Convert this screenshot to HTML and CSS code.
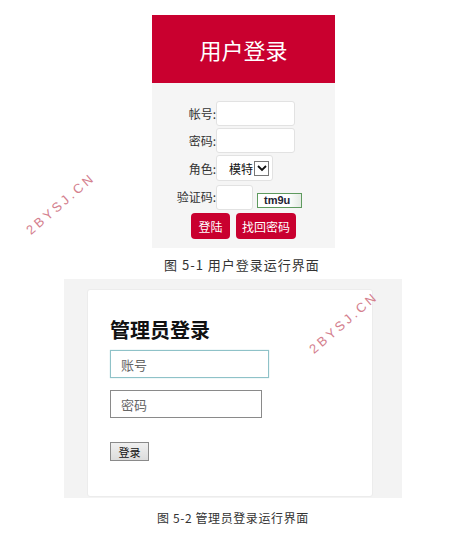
FILE: index.html
```html
<!DOCTYPE html>
<html lang="zh-CN">
<head>
  <meta charset="UTF-8" />
  <meta name="viewport" content="width=device-width, initial-scale=1.0" />
  <title>登录运行界面</title>
  <link rel="stylesheet" href="styles.css">
</head>
<body>
  <div class="page">
    <div class="user-login">
      <div class="user-head">用户登录</div>
      <div class="user-form">
        <label>帐号:</label>
        <input class="field" type="text" />
        <label>密码:</label>
        <input class="field" type="password" />
        <label>角色:</label>
        <div class="select">
          <span>模特</span>
          <span class="arrow">
            <svg width="12" height="12" viewBox="0 0 12 12"><path d="M2 4l4 4 4-4" fill="none" stroke="#111" stroke-width="1.8"/></svg>
          </span>
        </div>
        <label>验证码:</label>
        <div class="code-row">
          <input class="field short" type="text" />
          <span class="captcha">tm9u</span>
        </div>
        <div class="actions">
          <button class="red login">登陆</button>
          <button class="red find">找回密码</button>
        </div>
      </div>
    </div>
    <p class="caption cap1">图 5-1 用户登录运行界面</p>

    <div class="admin-wrap">
      <div class="admin-card">
        <h2>管理员登录</h2>
        <input class="admin-input focus" type="text" placeholder="账号" />
        <input class="admin-input" type="password" placeholder="密码" />
        <button class="plain">登录</button>
      </div>
    </div>
    <p class="caption cap2">图 5-2 管理员登录运行界面</p>

    <span class="mark mark1">2BYSJ.CN</span>
    <span class="mark mark2">2BYSJ.CN</span>
  </div>
</body>
</html>
```

FILE: styles.css
```css
body {
  margin: 0;
  background: #fff;
  font-family: "Noto Sans CJK SC", "Liberation Sans", sans-serif;
  color: #333;
}
.page {
  position: relative;
  width: 474px;
  height: 541px;
  padding-top: 15px;
  box-sizing: border-box;
}
.user-login {
  width: 183px;
  margin-left: 152px;
}
.user-head {
  height: 68px;
  background: #c9002f;
  color: #fff;
  font-size: 22px;
  display: flex;
  align-items: center;
  justify-content: center;
}
.user-form {
  background: #f5f5f5;
  height: 165px;
  box-sizing: border-box;
  padding-top: 18px;
  display: grid;
  grid-template-columns: 64px 1fr;
  align-content: start;
  align-items: center;
  row-gap: 2px;
}
.user-form label {
  justify-self: end;
  font-size: 12px;
  color: #333;
}
.field {
  width: 79px;
  height: 25px;
  box-sizing: border-box;
  border: 1px solid #e2e2e2;
  border-radius: 3px;
  background: #fff;
  margin: 0;
  padding: 0;
}
.field.short { width: 37px; }
.select {
  width: 57px;
  height: 26px;
  box-sizing: border-box;
  border: 1px solid #e2e2e2;
  border-radius: 3px;
  background: #fff;
  display: flex;
  align-items: center;
  justify-content: flex-end;
  gap: 1px;
  padding-right: 3px;
  font-size: 12px;
  color: #111;
}
.arrow {
  width: 15px;
  height: 15px;
  box-sizing: border-box;
  border: 1px solid #777;
  display: flex;
  align-items: center;
  justify-content: center;
}
.code-row {
  display: flex;
  align-items: flex-end;
  gap: 4px;
  margin-top: 2px;
}
.captcha {
  width: 45px;
  height: 15px;
  box-sizing: border-box;
  border: 1px solid #5e9a5e;
  background: linear-gradient(90deg, #fff 70%, #e4ebe4);
  font-family: "Liberation Sans", sans-serif;
  font-weight: bold;
  font-size: 11px;
  line-height: 13px;
  color: #223;
  padding-left: 6px;
  margin-bottom: 2px;
}
.actions {
  grid-column: 1 / 3;
  display: flex;
  gap: 6px;
  padding-left: 39px;
  margin-top: 1px;
}
button.red {
  height: 26px;
  border: none;
  border-radius: 4px;
  background: #c9002f;
  color: #fff;
  font-family: inherit;
  font-size: 12px;
  padding: 0;
}
.login { width: 39px; }
.find { width: 60px; }
.caption {
  margin: 0;
  font-size: 12px;
  color: #333;
  letter-spacing: 0.6px;
  line-height: 18px;
}
.cap1 {
  margin: 8px 0 0 164px;
  font-size: 13px;
  letter-spacing: 1px;
}
.admin-wrap {
  width: 338px;
  margin: 5px 0 0 64px;
  background: #f3f3f3;
  padding: 10px 0 1px 23px;
  box-sizing: border-box;
}
.admin-card {
  width: 286px;
  height: 208px;
  box-sizing: border-box;
  background: #fff;
  border: 1px solid #ececec;
  border-radius: 3px;
  padding: 27px 0 0 22px;
  display: flex;
  flex-direction: column;
  align-items: flex-start;
}
.admin-card h2 {
  margin: 0 0 7px;
  font-size: 20px;
  font-weight: bold;
  color: #111;
  line-height: 26px;
}
.admin-input {
  height: 28px;
  width: 152px;
  box-sizing: border-box;
  border: 1px solid #8a8a8a;
  padding: 0 10px;
  font-family: inherit;
  font-size: 13px;
  margin: 0 0 12px;
}
.admin-input.focus {
  width: 159px;
  border: 1px solid #8fc2c8;
  box-shadow: 0 0 1px #a8d4d8;
}
.admin-input::placeholder { color: #666; }
button.plain {
  margin-top: 12px;
  width: 39px;
  height: 19px;
  padding: 0;
  border: 1px solid #8a8a8a;
  background: linear-gradient(#f0f0f0, #dcdcdc);
  font-family: inherit;
  font-size: 11px;
  color: #111;
}
.cap2 {
  margin: 11px 0 0 157px;
}
.mark {
  position: absolute;
  width: 90px;
  text-align: center;
  font-family: "Liberation Sans", sans-serif;
  font-size: 13px;
  line-height: 14px;
  letter-spacing: 3px;
  color: #d4808e;
  transform: rotate(-41deg);
}
.mark1 { left: 16px; top: 197px; }
.mark2 { left: 299px; top: 316px; }
```
